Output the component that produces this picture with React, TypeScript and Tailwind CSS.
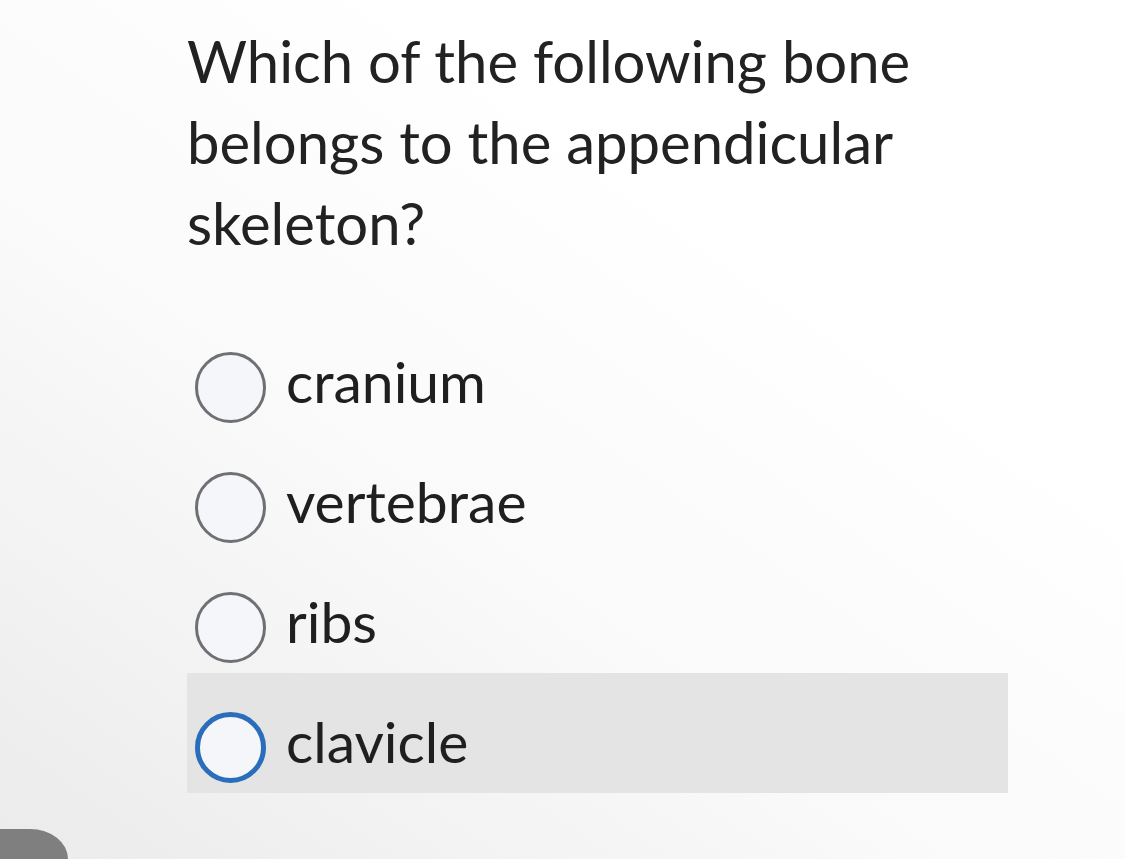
import React from "react";

const options = ["cranium", "vertebrae", "ribs", "clavicle"];

export default function App() {
  return (
    <div
      className="relative w-[1125px] h-[859px] overflow-hidden bg-[linear-gradient(35deg,#ebebeb_0%,#fafafa_40%,#ffffff_70%)]"
      style={{ fontFamily: "Lato, 'Noto Sans', sans-serif" }}
    >
      <div className="pl-[187px] pt-[20px]">
        <h1 className="w-[760px] text-[58px] leading-[81px] font-normal text-[#222222]">
          Which of the following bone belongs to the appendicular skeleton?
        </h1>
        <div className="mt-[50px] w-[821px] flex flex-col">
          {options.map((o, i) => {
            const sel = i === 3;
            return (
              <div
                key={o}
                className={`h-[120px] flex items-start gap-[20px] pl-[8px] pt-[39px] ${sel ? "bg-[#e4e4e4]" : ""}`}
              >
                <span
                  className={`w-[71px] h-[71px] rounded-full bg-[#f4f6fa] shrink-0 ${sel ? "border-[5px] border-[#2a6ebb]" : "border-[3px] border-[#6e7073]"}`}
                />
                <span className="-mt-[6px] text-[57px] leading-[70px] text-[#1f1f1f]">{o}</span>
              </div>
            );
          })}
        </div>
      </div>
      <div className="absolute left-0 bottom-0 w-[68px] h-[30px] bg-[#7f7f7f] rounded-tr-[38px_30px]" />
    </div>
  );
}
